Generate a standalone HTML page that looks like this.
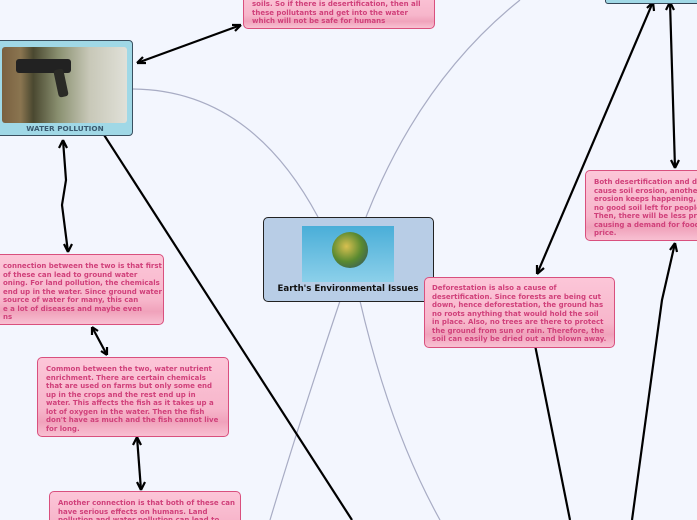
<!DOCTYPE html><html style="margin:0;width:697px;height:520px;overflow:hidden"><head><style>
body{margin:0;width:697px;height:520px;background:#f3f6fe;position:relative;overflow:hidden;font-family:"DejaVu Sans","Liberation Sans",sans-serif;}
.p{position:absolute;background:linear-gradient(#fcc6d8 0%,#f7b6cb 65%,#f0a2bb 82%,#f8c0d2 100%);border:1px solid #d9507e;border-radius:5px;color:#d0407a;font-weight:bold;font-size:7px;line-height:8.5px;padding:7px 8px;box-sizing:border-box;white-space:nowrap;overflow:hidden}
</style></head><body>
<svg width="697" height="520" style="position:absolute;left:0;top:0">
<g fill="none" stroke="#a8acc4" stroke-width="1.2">
<path d="M133 89 Q250 90 318 217"/>
<path d="M366 217 Q420 80 520 0"/>
<path d="M340 301 Q300 420 270 520"/>
<path d="M360 301 Q390 430 440 520"/>
</g>
<g stroke="#000" stroke-width="2.2" fill="none">
<path d="M137 63 L241 25"/><path d="M241 25 l-9 0 M241 25 l-6 6"/><path d="M137 63 l9 0 M137 63 l6 -6"/>
<path d="M63 140 L66 180 L62 205 L68 252"/><path d="M63 140 l-4 8 M63 140 l4 8 M68 252 l-4 -8 M68 252 l4 -8"/>
<path d="M92 327 L107 355"/><path d="M92 327 l0 8 M92 327 l6 4 M107 355 l0 -8 M107 355 l-6 -4"/>
<path d="M137 437 L141 490"/><path d="M137 437 l-4 8 M137 437 l4 8 M141 490 l-4 -8 M141 490 l4 -8"/>
<path d="M97 124 L352 520"/><path d="M97 124 l1 9 M97 124 l7 5"/>
<path d="M653 2 L537 274"/><path d="M537 274 l0 -9 M537 274 l7 -6 M653 2 l-6 6 M653 2 l1 9"/>
<path d="M670 2 L675 168"/><path d="M675 168 l-4 -8 M675 168 l4 -8 M670 2 l-4 8 M670 2 l4 8"/>
<path d="M530 320 L570 520"/><path d="M530 320 l-2 9 M530 320 l5 7"/>
<path d="M675 243 L662 300 L632 520"/><path d="M675 243 l-5 7 M675 243 l2 9"/>
</g></svg>
<div class="p" style="left:243px;top:-10px;width:192px;height:39px;padding-top:9px">soils. So if there is desertification, then all<br>these pollutants and get into the water<br>which will not be safe for humans</div>
<div style="position:absolute;left:605px;top:-6px;width:95px;height:8px;background:#a0d8e6;border:1px solid #345;border-radius:3px"></div>
<div style="position:absolute;left:-5px;top:40px;width:138px;height:96px;background:#a0d8e6;border:1px solid #3a5060;border-radius:4px;box-sizing:border-box">
<div style="position:absolute;left:6px;top:6px;width:125px;height:76px;background:linear-gradient(90deg,#7a6040 0%,#8a7550 15%,#4a4830 25%,#8a9070 45%,#c8c8b8 70%,#e0e0d8 100%);border-radius:3px"></div>
<div style="position:absolute;left:20px;top:18px;width:55px;height:14px;background:#222;border-radius:3px"></div>
<div style="position:absolute;left:60px;top:28px;width:10px;height:28px;background:#2a2a26;border-radius:3px;transform:rotate(-12deg)"></div>
<div style="position:absolute;left:0;width:138px;top:83px;text-align:center;font-size:7.3px;font-weight:bold;color:#3a5a70">WATER POLLUTION</div></div>
<div style="position:absolute;left:263px;top:217px;width:171px;height:85px;background:#b8cde6;border:1.5px solid #222;border-radius:5px;box-sizing:border-box">
<div style="position:absolute;left:38px;top:8px;width:92px;height:56px;background:linear-gradient(#4aaed8,#8cd0ea);"></div>
<div style="position:absolute;left:68px;top:14px;width:36px;height:36px;border-radius:50%;background:radial-gradient(circle at 40% 40%,#d8c050,#5a8a30 50%,#2a4a6a)"></div>
<div style="position:absolute;left:0;width:168px;top:66px;text-align:center;font-size:8.6px;font-weight:bold;color:#111">Earth's Environmental Issues</div></div>
<div class="p" style="left:-6px;top:254px;width:170px;height:71px">connection between the two is that first<br>of these can lead to ground water<br>oning. For land pollution, the chemicals<br>end up in the water. Since ground water<br>source of water for many, this can<br>e a lot of diseases and maybe even<br>ns</div>
<div class="p" style="left:37px;top:357px;width:192px;height:80px">Common between the two, water nutrient<br>enrichment. There are certain chemicals<br>that are used on farms but only some end<br>up in the crops and the rest end up in<br>water. This affects the fish as it takes up a<br>lot of oxygen in the water. Then the fish<br>don't have as much and the fish cannot live<br>for long.</div>
<div class="p" style="left:49px;top:491px;width:192px;height:45px">Another connection is that both of these can<br>have serious effects on humans. Land<br>pollution and water pollution can lead to</div>
<div class="p" style="left:585px;top:170px;width:120px;height:71px">Both desertification and de<br>cause soil erosion, another<br>erosion keeps happening, t<br>no good soil left for people<br>Then, there will be less pro<br>causing a demand for food<br>price.</div>
<div class="p" style="left:424px;top:277px;width:191px;height:71px;padding-left:7px;padding-top:6px">Deforestation is also a cause of<br>desertification. Since forests are being cut<br>down, hence deforestation, the ground has<br>no roots anything that would hold the soil<br>in place. Also, no trees are there to protect<br>the ground from sun or rain. Therefore, the<br>soil can easily be dried out and blown away.</div>
</body></html>
